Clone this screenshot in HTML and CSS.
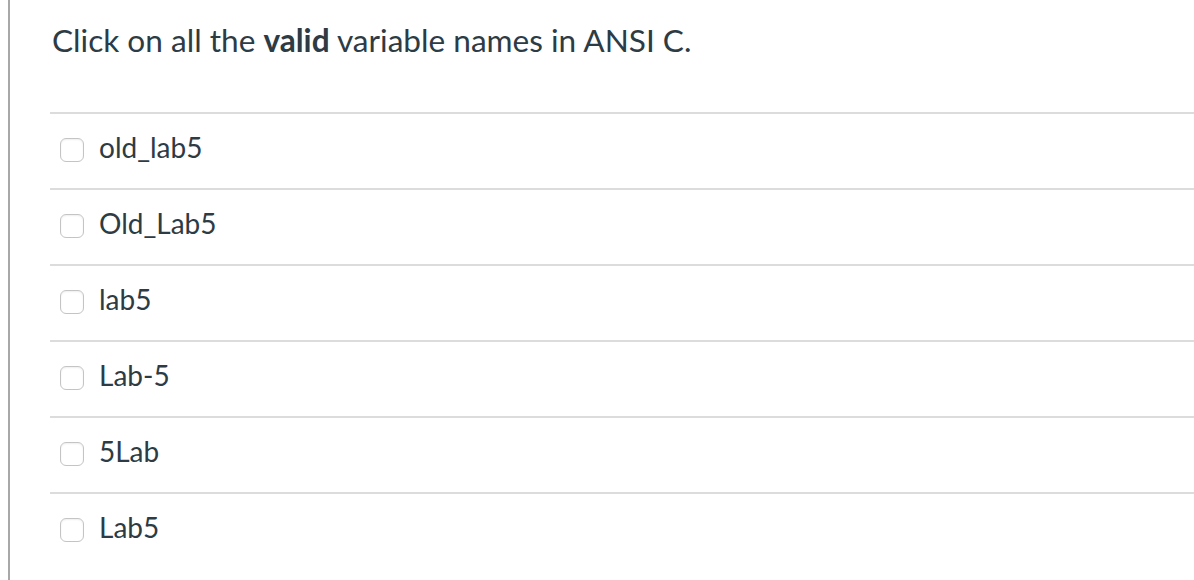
FILE: index.html
```html
<!DOCTYPE html>
<html>
<head>
<meta charset="utf-8">
<link rel="stylesheet" href="styles.css">
</head>
<body>
<div class="question">
  <div class="question-text">Click on all the <strong>valid</strong> variable names in ANSI C.</div>
  <div class="answers">
    <label class="answer"><span class="box"></span><span class="label">old_lab5</span></label>
    <label class="answer"><span class="box"></span><span class="label">Old_Lab5</span></label>
    <label class="answer"><span class="box"></span><span class="label">lab5</span></label>
    <label class="answer"><span class="box"></span><span class="label">Lab-5</span></label>
    <label class="answer"><span class="box"></span><span class="label">5Lab</span></label>
    <label class="answer"><span class="box"></span><span class="label">Lab5</span></label>
  </div>
</div>
</body>
</html>
```
FILE: styles.css
```css
html, body {
  margin: 0;
  padding: 0;
  background: #fff;
  height: 100%;
  overflow: hidden;
}
body {
  font-family: Lato, "Noto Sans", sans-serif;
  color: #2d3b45;
}
.question {
  margin-left: 8px;
  border-left: 2px solid #a8a8a8;
  min-height: 100%;
  padding-left: 40px;
  box-sizing: border-box;
}
.question-text {
  font-size: 31.6px;
  line-height: 38px;
  padding-top: 21px;
  padding-left: 2px;
  margin-bottom: 53px;
}
.question-text strong {
  font-weight: 700;
}
.answers {
  display: flex;
  flex-direction: column;
}
.answer {
  display: flex;
  align-items: flex-start;
  gap: 15px;
  height: 74px;
  box-sizing: content-box;
  border-top: 2px solid #dcdcdc;
  padding-left: 10px;
  padding-top: 0;
}
.box {
  width: 22px;
  height: 22px;
  margin-top: 24px;
  border: 1px solid #c4c4c4;
  border-radius: 6px;
  box-shadow: inset 0 1px 2px rgba(0,0,0,0.07);
  flex: none;
}
.label {
  font-size: 28px;
  line-height: 34px;
  margin-top: 16px;
}
```
